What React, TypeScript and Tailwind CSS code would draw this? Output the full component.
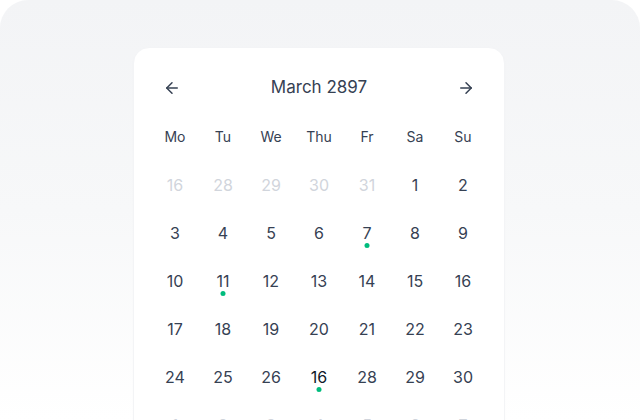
import React from 'react'
import { ArrowLeft, ArrowRight } from 'lucide-react'

interface Day {
  label: number
  muted?: boolean
  dot?: boolean
  today?: boolean
}

const weekdays = ['Mo', 'Tu', 'We', 'Thu', 'Fr', 'Sa', 'Su']

const rows: Day[][] = [
  [
    { label: 16, muted: true },
    { label: 28, muted: true },
    { label: 29, muted: true },
    { label: 30, muted: true },
    { label: 31, muted: true },
    { label: 1 },
    { label: 2 },
  ],
  [
    { label: 3 },
    { label: 4 },
    { label: 5 },
    { label: 6 },
    { label: 7, dot: true },
    { label: 8 },
    { label: 9 },
  ],
  [
    { label: 10 },
    { label: 11, dot: true },
    { label: 12 },
    { label: 13 },
    { label: 14 },
    { label: 15 },
    { label: 16 },
  ],
  [
    { label: 17 },
    { label: 18 },
    { label: 19 },
    { label: 20 },
    { label: 21 },
    { label: 22 },
    { label: 23 },
  ],
  [
    { label: 24 },
    { label: 25 },
    { label: 26 },
    { label: 16, dot: true, today: true },
    { label: 28 },
    { label: 29 },
    { label: 30 },
  ],
  [
    { label: 1, muted: true },
    { label: 2, muted: true },
    { label: 3, muted: true },
    { label: 4, muted: true },
    { label: 5, muted: true },
    { label: 6, muted: true },
    { label: 7, muted: true },
  ],
]

function DayCell({ day }: { day: Day }) {
  const color = day.muted ? 'text-gray-300' : day.today ? 'text-gray-900' : 'text-gray-700'
  return (
    <div className="relative flex h-12 w-12 items-center justify-center">
      <span className={`text-base ${color}`}>{day.label}</span>
      {day.dot && (
        <span className="absolute left-1/2 top-[34px] h-[5px] w-[5px] -translate-x-1/2 rounded-full bg-emerald-500" />
      )}
    </div>
  )
}

export default function App() {
  return (
    <div className="h-[420px] w-[640px] overflow-hidden bg-white" style={{ fontFamily: 'Inter, "Noto Sans", sans-serif' }}>
      <div className="h-full rounded-t-[28px] bg-linear-to-b from-[#f3f4f6] via-[#f7f8f9] to-white pl-[133px] pt-[47px]">
        <div className="h-[400px] w-[372px] rounded-2xl border border-gray-100 bg-white pt-4 shadow-[0_1px_2px_rgba(0,0,0,0.02)]">
          {/* month header */}
          <div className="flex h-12 items-center justify-between px-[22px]">
            <button className="flex h-8 w-8 items-center justify-center text-gray-700">
              <ArrowLeft size={18} strokeWidth={2} />
            </button>
            <span className="text-[17px] text-gray-700">March 2897</span>
            <button className="flex h-8 w-8 items-center justify-center text-gray-700">
              <ArrowRight size={18} strokeWidth={2} />
            </button>
          </div>

          <div className="px-[17px] pt-px">
            <div className="grid grid-cols-7">
              {weekdays.map((d) => (
                <div key={d} className="flex h-12 w-12 items-center justify-center text-sm text-gray-700">
                  {d}
                </div>
              ))}
            </div>
            {rows.map((row, i) => (
              <div key={i} className="grid grid-cols-7">
                {row.map((day, j) => (
                  <DayCell key={j} day={day} />
                ))}
              </div>
            ))}
          </div>
        </div>
      </div>
    </div>
  )
}
